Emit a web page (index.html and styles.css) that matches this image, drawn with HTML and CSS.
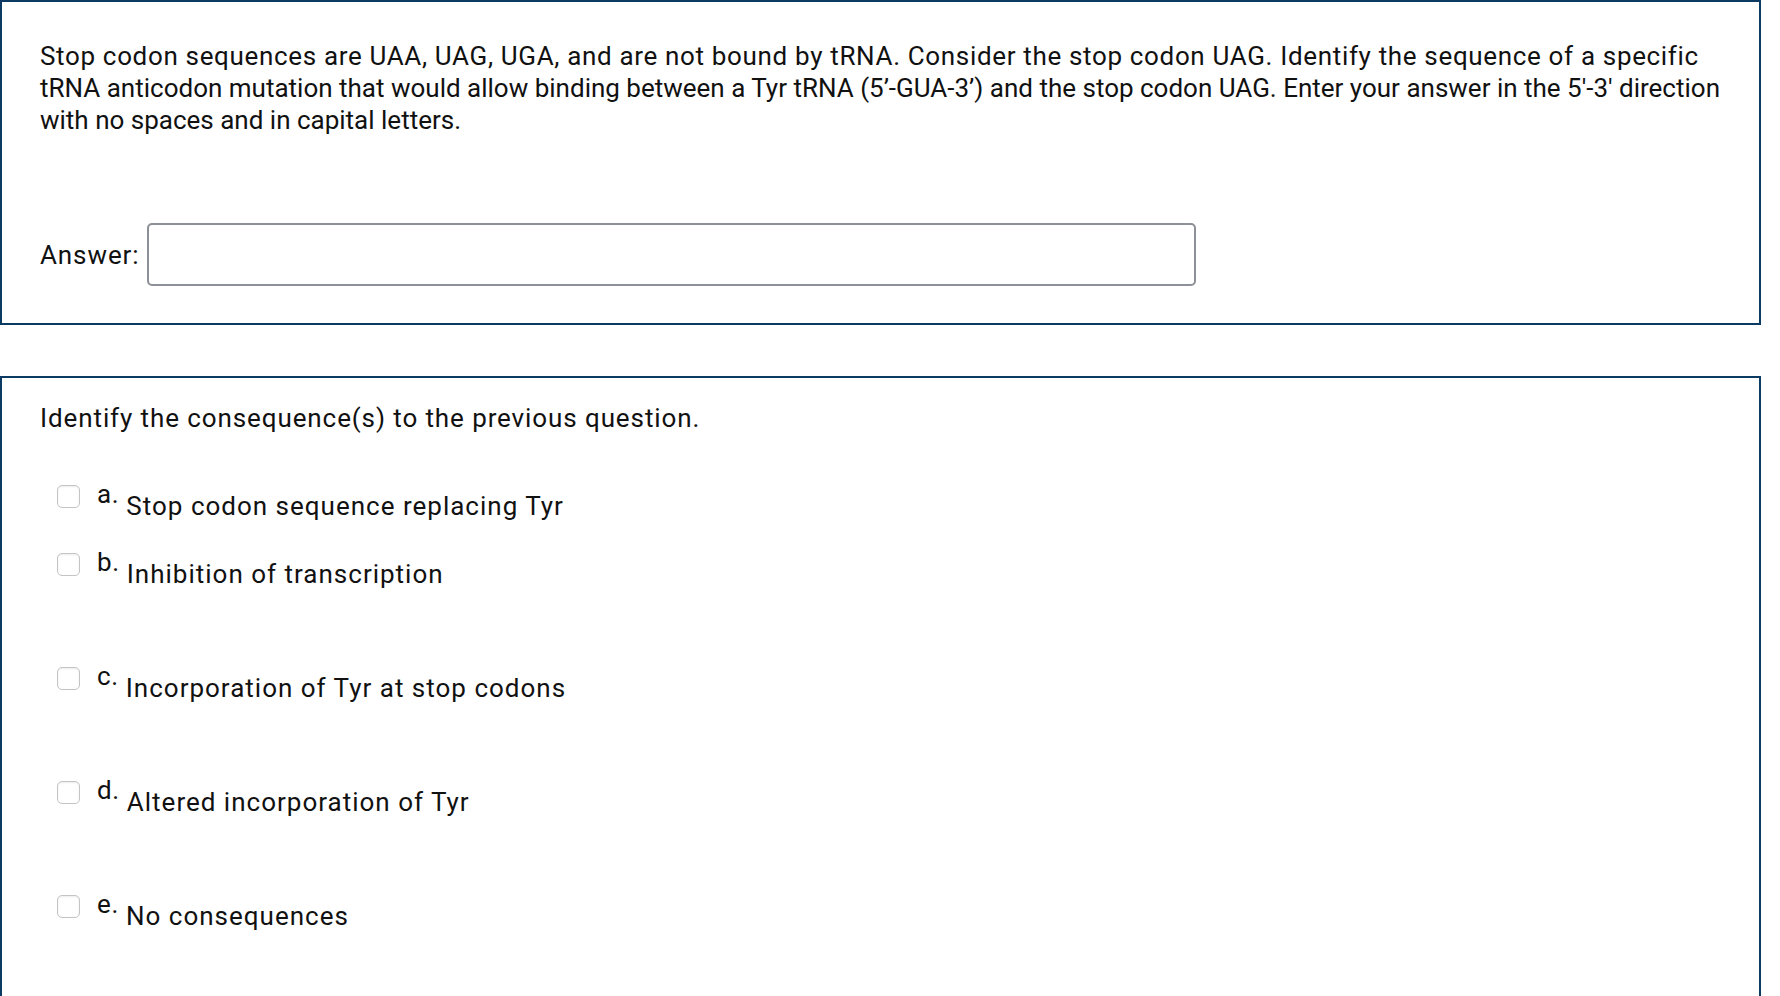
FILE: index.html
```html
<!DOCTYPE html>
<html lang="en">
<head>
<meta charset="utf-8">
<title>Quiz</title>
<link rel="stylesheet" href="styles.css">
</head>
<body>
<div class="page">
  <section class="que">
    <p class="qtext"><span class="qline-wide">Stop codon sequences are UAA, UAG, UGA, and are not bound by tRNA. Consider the stop codon UAG. Identify the sequence of a specific</span><br>tRNA anticodon mutation that would allow binding between a Tyr tRNA (5’-GUA-3’) and the stop codon UAG. Enter your answer in the 5'-3' direction<br>with no spaces and in capital letters.</p>
    <div class="answer-row">
      <label class="answer-label" for="ans">Answer:</label>
      <input class="answer-input" id="ans" type="text">
    </div>
  </section>

  <section class="que que-multi">
    <p class="prompt">Identify the consequence(s) to the previous question.</p>
    <div class="options">
      <div class="option option-tight">
        <span class="cb"></span>
        <span class="letter">a.</span>
        <span class="otext">Stop codon sequence replacing Tyr</span>
      </div>
      <div class="option">
        <span class="cb"></span>
        <span class="letter">b.</span>
        <span class="otext">Inhibition of transcription</span>
      </div>
      <div class="option">
        <span class="cb"></span>
        <span class="letter">c.</span>
        <span class="otext">Incorporation of Tyr at stop codons</span>
      </div>
      <div class="option">
        <span class="cb"></span>
        <span class="letter">d.</span>
        <span class="otext">Altered incorporation of Tyr</span>
      </div>
      <div class="option">
        <span class="cb"></span>
        <span class="letter">e.</span>
        <span class="otext">No consequences</span>
      </div>
    </div>
  </section>
</div>
</body>
</html>
```
FILE: styles.css
```css
html, body {
  margin: 0;
  padding: 0;
  background: #ffffff;
}

body {
  font-family: Roboto, "Noto Sans", "Liberation Sans", sans-serif;
  font-size: 26px;
  letter-spacing: 0.9px;
  color: #111111;
  overflow: hidden;
}

.page {
  width: 1761px;
  display: flex;
  flex-direction: column;
  gap: 51px;
}

.que {
  border: 2px solid #0b3a63;
  padding: 38px 2px 37px 38px;
}

.qtext {
  margin: 0;
  line-height: 32px;
  letter-spacing: 0;
  white-space: nowrap;
}

.qline-wide {
  letter-spacing: 0.66px;
}

.answer-row {
  display: flex;
  align-items: center;
  gap: 8px;
  margin-top: 87px;
}

.answer-label {
  line-height: 30px;
}

.answer-input {
  width: 1049px;
  height: 63px;
  box-sizing: border-box;
  border: 2px solid #8d9096;
  border-radius: 5px;
  background: #fff;
  margin: 0;
  padding: 0 10px;
  font: inherit;
}

.que-multi {
  padding-top: 25px;
  height: 800px;
}

.prompt {
  margin: 0;
  line-height: 30px;
}

.options {
  display: flex;
  flex-direction: column;
  margin-top: 49px;
  padding-left: 17px;
}

.option {
  display: flex;
  align-items: flex-start;
  height: 114px;
}

.option-tight {
  height: 68px;
}

.cb {
  width: 21px;
  height: 21px;
  margin-top: 3px;
  border: 1.5px solid #c4c4c4;
  border-radius: 5px;
  background: #fff;
  box-shadow: inset 0 1px 2px rgba(0,0,0,0.08);
  flex: none;
}

.letter {
  margin-left: 17px;
  line-height: 25px;
  letter-spacing: 0.65px;
}

.otext {
  margin-left: 7px;
  margin-top: 12px;
  line-height: 25px;
  letter-spacing: 1px;
}
```
